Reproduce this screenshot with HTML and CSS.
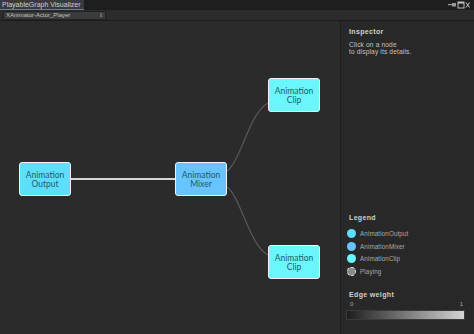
FILE: index.html
```html
<!DOCTYPE html>
<html>
<head>
<meta charset="utf-8">
<link rel="stylesheet" href="styles.css">
</head>
<body>
<div class="window">
  <div class="tabbar">
    <div class="tab">PlayableGraph Visualizer</div>
    <div class="winicons">
      <svg width="22" height="8" viewBox="0 0 22 8">
        <rect x="0" y="3" width="4" height="1.2" fill="#9a9a9a"/>
        <rect x="4" y="2" width="4" height="3.5" fill="#9a9a9a"/>
        <rect x="10" y="1" width="6" height="6" fill="none" stroke="#bdbdbd" stroke-width="1"/>
        <rect x="10" y="1" width="6" height="1.6" fill="#bdbdbd"/>
        <path d="M18 1.5 L21.5 6.5 M21.5 1.5 L18 6.5" stroke="#c8c8c8" stroke-width="1"/>
      </svg>
    </div>
  </div>
  <div class="toolbar">
    <div class="dropdown"><span>XAnimator-Actor_Player</span><span class="arrows">⇕</span></div>
  </div>
  <div class="main">
    <div class="canvas">
      <svg class="edges" width="341" height="313" viewBox="0 0 341 313">
        <path d="M71 158 L175 158" stroke="#d6d6d6" stroke-width="2" fill="none"/>
        <path d="M227 150 C241 140, 249 92, 268 82" stroke="#575757" stroke-width="1.2" fill="none"/>
        <path d="M227 166 C241 176, 249 224, 268 234" stroke="#575757" stroke-width="1.2" fill="none"/>
      </svg>
      <div class="node output" style="left:19px;top:141px">Animation<br>Output</div>
      <div class="node mixer" style="left:175px;top:141px">Animation<br>Mixer</div>
      <div class="node clip" style="left:268px;top:57px">Animation<br>Clip</div>
      <div class="node clip" style="left:268px;top:224px">Animation<br>Clip</div>
    </div>
    <div class="panel">
      <div class="title">Inspector</div>
      <div class="info">Click on a node<br>to display its details.</div>
      <div class="title legend-title">Legend</div>
      <div class="legend">
        <div class="item"><span class="dot c-output"></span>AnimationOutput</div>
        <div class="item"><span class="dot c-mixer"></span>AnimationMixer</div>
        <div class="item"><span class="dot c-clip"></span>AnimationClip</div>
        <div class="item"><span class="dot playing"></span>Playing</div>
      </div>
      <div class="title weight-title">Edge weight</div>
      <div class="scale"><span>0</span><span>1</span></div>
      <div class="gradient"></div>
    </div>
  </div>
</div>
</body>
</html>
```

FILE: styles.css
```css
* { box-sizing: border-box; }
html, body { margin: 0; padding: 0; }
body {
  width: 474px;
  height: 334px;
  overflow: hidden;
  background: #1f1f1f;
  font-family: "Liberation Sans", Arial, sans-serif;
}
.window {
  display: flex;
  flex-direction: column;
  width: 474px;
  height: 334px;
}
.tabbar {
  height: 10px;
  display: flex;
  align-items: stretch;
  justify-content: space-between;
  background: #1e1e1e;
}
.tab {
  width: 84px;
  background: #3a3a3a;
  border-bottom: 1px solid #6b7f9a;
  color: #cfcfcf;
  font-size: 7px;
  line-height: 9px;
  padding-left: 2px;
  white-space: nowrap;
  overflow: hidden;
}
.winicons {
  display: flex;
  align-items: center;
  padding-right: 4px;
}
.winicons svg { display: block; }
.toolbar {
  height: 11px;
  background: #2c2c2c;
  border-bottom: 1px solid #1c1c1c;
  display: flex;
  align-items: center;
  padding-left: 3px;
}
.dropdown {
  width: 103px;
  height: 9px;
  background: #3b3b3b;
  border: 1px solid #222;
  border-radius: 1px;
  color: #c4c4c4;
  font-size: 6px;
  line-height: 7px;
  display: flex;
  justify-content: space-between;
  padding: 0 2px 0 2px;
}
.arrows { font-size: 5px; color: #aaa; }
.main {
  flex: 1;
  display: flex;
}
.canvas {
  position: relative;
  width: 341px;
  background: #2b2b2b;
  border-right: 1px solid #1d1d1d;
}
.edges { position: absolute; left: 0; top: 0; }
.node {
  position: absolute;
  width: 52px;
  height: 34px;
  border: 1px solid #f2f2f2;
  border-radius: 3px;
  display: flex;
  align-items: center;
  justify-content: center;
  text-align: center;
  padding-top: 2px;
  font-family: "Lato", "DejaVu Sans", sans-serif;
  font-size: 8.5px;
  line-height: 9.5px;
  color: #235b6b;
}
.output { background: #5ddffb; }
.mixer { background: #67c4fe; }
.clip { background: #6af7fb; }
.panel {
  flex: 1;
  background: #282828;
  padding: 6px 0 0 8px;
  display: flex;
  flex-direction: column;
  color: #c9c9c9;
}
.title {
  font-weight: bold;
  font-size: 7px;
  letter-spacing: 0.35px;
  line-height: 9px;
  color: #d0d0d0;
}
.info {
  margin-top: 5px;
  font-size: 6.6px;
  line-height: 7px;
  color: #c2c2c2;
  letter-spacing: 0.15px;
}
.legend-title { margin-top: 158px; }
.legend {
  margin-top: 7px;
  display: flex;
  flex-direction: column;
  gap: 3.7px;
}
.item {
  display: flex;
  align-items: center;
  gap: 4px;
  font-size: 6.3px;
  line-height: 9px;
  color: #a8a8a8;
  margin-left: -2px;
  letter-spacing: 0.1px;
}
.dot {
  width: 9px;
  height: 9px;
  border-radius: 50%;
  display: inline-block;
}
.c-output { background: #5ddffb; }
.c-mixer { background: #67c4fe; }
.c-clip { background: #6af7fb; }
.playing {
  background: #8a8a8a;
  border: 1.5px dashed #f0f0f0;
}
.weight-title { margin-top: 14px; }
.scale {
  margin-top: 2px;
  margin-left: 1px;
  width: 113px;
  display: flex;
  justify-content: space-between;
  font-size: 6px;
  line-height: 6px;
  color: #a8a8a8;
}
.gradient {
  margin-top: 3px;
  margin-left: -3px;
  width: 119px;
  height: 10px;
  background: linear-gradient(to right, #1e1e1e, #d4d4d4);
  border: 1px solid #3a3a3a;
}
```
